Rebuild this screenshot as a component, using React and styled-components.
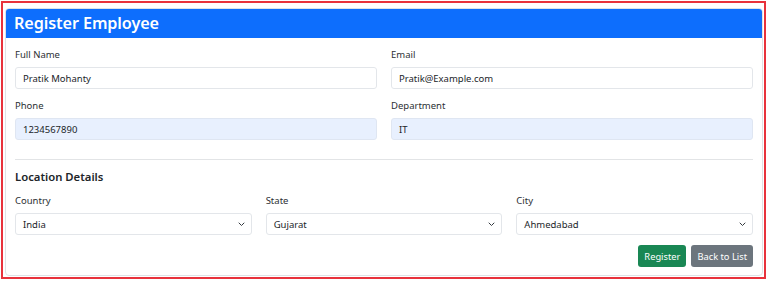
import React from "react";
import styled, { createGlobalStyle } from "styled-components";

const Global = createGlobalStyle`
  html, body { margin: 0; padding: 0; background: #ffffff; }
  body { font-family: "Noto Sans", "Open Sans", sans-serif; color: #212529; }
  * { box-sizing: border-box; }
`;

const Frame = styled.div`
  margin: 1px 0 0 1px;
  width: 765px;
  height: 278px;
  border: 2px solid #e8323c;
  padding: 5px 1px 0 2px;
`;

const Card = styled.div`
  border: 1px solid #dfe2e6;
  border-radius: 4px;
  overflow: hidden;
  background: #fff;
`;

const Header = styled.div`
  height: 30px;
  background: #0d6efd;
  color: #fff;
  display: flex;
  align-items: center;
  padding: 0 9px;
  margin: -1px -1px 0 -1px;
  border-radius: 4px 4px 0 0;
`;

const Title = styled.h2`
  margin: 0;
  font-size: 16.2px;
  font-weight: 600;
  letter-spacing: -0.1px;
`;

const Body = styled.div`
  padding: 10px 9px 8px 9px;
`;

const Grid = styled.div`
  display: grid;
  grid-template-columns: repeat(${(p) => p.$cols}, 1fr);
  column-gap: ${(p) => p.$gap}px;
  row-gap: 10px;
`;

const Field = styled.div`
  display: flex;
  flex-direction: column;
`;

const Label = styled.label`
  font-size: 9.5px;
  line-height: 14px;
  color: #2b2f33;
  margin-bottom: 5px;
`;

const Input = styled.div`
  height: 22px;
  border: 1px solid ${(p) => (p.$filled ? "#dfe6f2" : "#e3e6ea")};
  background: ${(p) => (p.$filled ? "#e8f0fe" : "#fff")};
  border-radius: 3px;
  font-size: 9.5px;
  color: #212529;
  display: flex;
  align-items: center;
  justify-content: space-between;
  padding: 0 6px 0 7px;
`;

const Divider = styled.hr`
  border: 0;
  border-top: 1px solid #e2e4e6;
  margin: 19px 0 8px 0;
`;

const Section = styled.h5`
  margin: 0 0 8px 0;
  font-size: 11.3px;
  line-height: 18px;
  font-weight: 600;
  color: #212529;
`;

const Actions = styled.div`
  display: flex;
  justify-content: flex-end;
  gap: 5px;
  margin-top: 10px;
`;

const Button = styled.button`
  height: 22px;
  border: 0;
  border-radius: 3px;
  background: ${(p) => (p.$variant === "success" ? "#198754" : "#6c757d")};
  color: #fff;
  font-family: inherit;
  font-size: 9.3px;
  padding: 0 6px;
  cursor: pointer;
`;

const Chevron = () => (
  <svg width="7" height="5" viewBox="0 0 14 10" fill="none">
    <path d="M2 2l5 5 5-5" stroke="#343a40" strokeWidth="2" strokeLinecap="round" strokeLinejoin="round" />
  </svg>
);

export default function App() {
  return (
    <>
      <Global />
      <Frame>
        <Card>
          <Header>
            <Title>Register Employee</Title>
          </Header>
          <Body>
            <Grid $cols={2} $gap={14}>
              <Field>
                <Label>Full Name</Label>
                <Input>Pratik Mohanty</Input>
              </Field>
              <Field>
                <Label>Email</Label>
                <Input>Pratik@Example.com</Input>
              </Field>
              <Field>
                <Label>Phone</Label>
                <Input $filled>1234567890</Input>
              </Field>
              <Field>
                <Label>Department</Label>
                <Input $filled>IT</Input>
              </Field>
            </Grid>
            <Divider />
            <Section>Location Details</Section>
            <Grid $cols={3} $gap={14}>
              <Field>
                <Label>Country</Label>
                <Input>
                  India
                  <Chevron />
                </Input>
              </Field>
              <Field>
                <Label>State</Label>
                <Input>
                  Gujarat
                  <Chevron />
                </Input>
              </Field>
              <Field>
                <Label>City</Label>
                <Input>
                  Ahmedabad
                  <Chevron />
                </Input>
              </Field>
            </Grid>
            <Actions>
              <Button $variant="success">Register</Button>
              <Button>Back to List</Button>
            </Actions>
          </Body>
        </Card>
      </Frame>
    </>
  );
}
